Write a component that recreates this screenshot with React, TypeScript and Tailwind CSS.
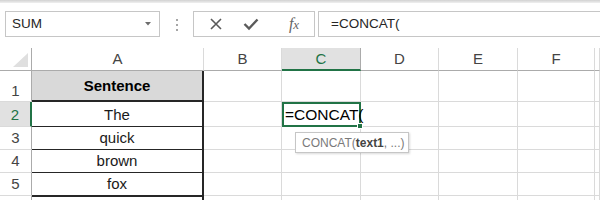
const COLS = ['A', 'B', 'C', 'D', 'E', 'F', ''];
const WORDS = ['The', 'quick', 'brown', 'fox'];

function Dots() {
  return (
    <div className="flex w-[33px] flex-col items-center justify-center gap-[3px] pt-[1px]">
      <span className="h-[2px] w-[2px] bg-[#a6a6a6]" />
      <span className="h-[2px] w-[2px] bg-[#a6a6a6]" />
      <span className="h-[2px] w-[2px] bg-[#a6a6a6]" />
    </div>
  );
}

function FormulaBar() {
  return (
    <div className="relative h-[48px] bg-white">
      <div className="h-[3px] bg-gradient-to-b from-[#d2d2d2] to-[#f0f0f0]" />
      <div className="mt-[8px] flex h-[26px]">
        <div className="ml-[5px] flex w-[155px] items-center justify-between border border-[#c6c6c6] pl-[6px] pr-[8px]">
          <span className="text-[13.5px] text-[#262626]">SUM</span>
          <svg width="6" height="4" viewBox="0 0 6 4">
            <path d="M0 0 L6 0 L3 3.5 Z" fill="#6d6d6d" />
          </svg>
        </div>
        <Dots />
        <div className="flex w-[122px] items-center border border-[#c6c6c6]">
          <div className="flex w-[42px] justify-center pl-[2px]">
            <svg width="14" height="14" viewBox="0 0 14 14">
              <path d="M2 2 L12 12 M12 2 L2 12" stroke="#5a5a5a" strokeWidth="1.6" />
            </svg>
          </div>
          <div className="flex w-[30px] justify-center">
            <svg width="16" height="14" viewBox="0 0 16 14">
              <path d="M1.5 7 L6 11.5 L14.5 2.5" stroke="#5a5a5a" strokeWidth="2.4" fill="none" />
            </svg>
          </div>
          <div className="flex flex-1 justify-center pl-[8px]">
            <span className="text-[16px] italic text-[#666]" style={{ fontFamily: '"Liberation Serif", serif' }}>
              f<span className="text-[13px]">x</span>
            </span>
          </div>
        </div>
        <div className="ml-[3px] flex flex-1 items-center border border-r-0 border-[#c6c6c6] pl-[12px]">
          <span className="text-[13.5px] text-[#262626]">=CONCAT(</span>
        </div>
      </div>
    </div>
  );
}

function Sheet() {
  const grid = 'grid grid-cols-[32px_172px_78px_79px_78px_79px_77px_1fr] grid-rows-[23px_31px_25px_23px_23px_23px_1fr]';
  return (
    <div className={`relative ${grid} h-[152px]`}>
      {/* header row */}
      <div className="relative border-r border-b border-[#ababab]">
        <svg className="absolute right-[3px] bottom-[3px]" width="15" height="14" viewBox="0 0 15 14">
          <path d="M15 0 L15 14 L0 14 Z" fill="#dfdfdf" />
        </svg>
      </div>
      {COLS.map((c) =>
        c === 'C' ? (
          <div key={c} className="flex items-center justify-center border-r border-b-2 border-r-[#ababab] border-b-[#217346] bg-[#e1e1e1] pt-[1px] text-[15px] text-[#217346]">
            {c}
          </div>
        ) : (
          <div key={c || 'g'} className="flex items-center justify-center border-r border-b border-r-[#dadada] border-b-[#ababab] pt-[1px] text-[15px] text-[#444]">
            {c}
          </div>
        )
      )}

      {/* row 1 */}
      <div className="flex items-end justify-center border-r border-b border-r-[#ababab] border-b-[#dadada] pb-[1px] text-[15px] leading-[18px] text-[#444]">1</div>
      <div className="flex items-center justify-center border-r-2 border-b-2 border-[#262626] bg-[#d9d9d9] pt-[2px] text-[15px] font-bold text-black">Sentence</div>
      {COLS.slice(1).map((c) => (
        <div key={'r1' + c} className="border-r border-b border-[#dadada]" />
      ))}

      {WORDS.map((w, i) => {
        const row = i + 2;
        const sel = row === 2;
        return [
          <div
            key={'h' + row}
            className={
              sel
                ? 'flex items-end justify-center border-r-2 border-b border-r-[#217346] border-b-[#dadada] bg-[#e1e1e1] text-[15px] text-[#217346]'
                : 'flex items-end justify-center border-r border-b border-r-[#ababab] border-b-[#dadada] text-[15px] text-[#444]'
            }
          >
            {row}
          </div>,
          <div key={'a' + row} className="flex items-end justify-center border-r-2 border-b border-r-[#262626] border-b-[#262626] text-[15px] text-[#1a1a1a]">
            {w}
          </div>,
          ...COLS.slice(1).map((c) =>
            sel && c === 'C' ? (
              <div key={'c' + row + c} className="relative flex items-end border-2 border-[#217346] pl-[1px] text-[15.5px] leading-[20px] text-black">
                <span className="whitespace-nowrap">=CONCAT(</span>
                <span className="ml-[1px] h-[18px] w-[1px] bg-black" />
                <span className="absolute right-[-4px] bottom-[-4px] h-[6px] w-[6px] border border-white bg-[#217346]" />
              </div>
            ) : (
              <div key={'c' + row + c} className="border-r border-b border-[#dadada]" />
            )
          ),
        ];
      })}

      {/* partial row */}
      <div className="border-r border-[#ababab]" />
      <div className="border-r-2 border-t border-r-[#262626] border-t-[#262626]" />
      {COLS.slice(1).map((c) => (
        <div key={'r7' + c} className="border-r border-[#dadada]" />
      ))}

      {/* tooltip */}
      <div className="absolute left-[295px] top-[84px] flex h-[21px] w-[114px] items-center border border-[#c6c6c6] bg-white pl-[6px] text-[12px] text-[#7a7a7a] shadow-[1px_1px_2px_rgba(0,0,0,0.15)]">
        CONCAT(<span className="font-bold text-[#444]">text1</span>, ...)
      </div>
    </div>
  );
}

export default function App() {
  return (
    <div className="h-[200px] w-[600px] overflow-hidden bg-white" style={{ fontFamily: '"Liberation Sans", Arial, sans-serif' }}>
      <FormulaBar />
      <Sheet />
    </div>
  );
}
